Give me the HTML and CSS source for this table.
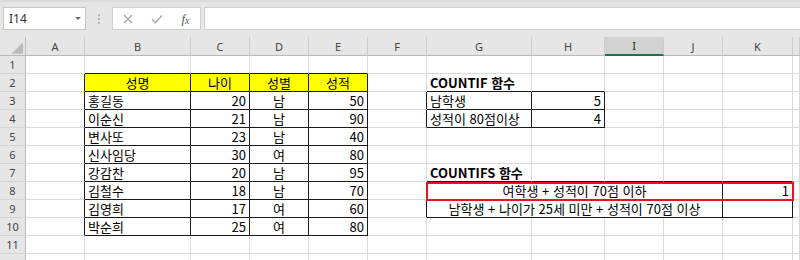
FILE: index.html
```html
<!DOCTYPE html>
<html lang="ko">
<head>
<meta charset="utf-8">
<title>COUNTIF / COUNTIFS</title>
<link rel="stylesheet" href="styles.css">
</head>
<body>
<div class="app">
  <div class="toolbar">
    <div class="namebox"><span class="nb-text">I14</span><span class="nb-arrow"></span></div>
    <div class="vsep"><i></i><i></i><i></i></div>
    <div class="fbtns">
      <span class="fb"><svg width="10" height="10" viewBox="0 0 10 10"><path d="M1 1L9 9M9 1L1 9" stroke="#a9a9a9" stroke-width="1.3" fill="none"/></svg></span>
      <span class="fb"><svg width="12" height="10" viewBox="0 0 12 10"><path d="M1 5.5L4.3 8.7L11 1.5" stroke="#a9a9a9" stroke-width="1.4" fill="none"/></svg></span>
      <span class="fb fx">f<span class="fxx">x</span></span>
    </div>
    <div class="finput"></div>
  </div>

  <div class="sheet">
    <!-- column headers -->
    <div class="ch corner"><svg width="26" height="18" viewBox="0 0 26 18"><polygon points="12,17 24,17 24,5" fill="#b9b9b9"/></svg></div>
    <div class="ch">A</div><div class="ch">B</div><div class="ch">C</div><div class="ch">D</div><div class="ch">E</div><div class="ch">F</div><div class="ch">G</div><div class="ch">H</div><div class="ch sel">I</div><div class="ch">J</div><div class="ch">K</div><div class="ch"></div>

    <!-- row 1 -->
    <div class="rh">1</div>
    <div class="c"></div><div class="c tt"></div><div class="c tt"></div><div class="c tt"></div><div class="c tt"></div><div class="c"></div><div class="c"></div><div class="c"></div><div class="c"></div><div class="c"></div><div class="c"></div><div class="c"></div>

    <!-- row 2 -->
    <div class="rh">2</div>
    <div class="c tl"></div>
    <div class="c t y m">성명</div><div class="c t y m">나이</div><div class="c t y m">성별</div><div class="c t y m">성적</div>
    <div class="c"></div>
    <div class="c tt b">COUNTIF 함수</div><div class="c tt"></div>
    <div class="c"></div><div class="c"></div><div class="c"></div><div class="c"></div>

    <!-- row 3 -->
    <div class="rh">3</div>
    <div class="c tl"></div>
    <div class="c t">홍길동</div><div class="c t r">20</div><div class="c t m">남</div><div class="c t r">50</div>
    <div class="c tl"></div>
    <div class="c t">남학생</div><div class="c t r">5</div>
    <div class="c"></div><div class="c"></div><div class="c"></div><div class="c"></div>

    <!-- row 4 -->
    <div class="rh">4</div>
    <div class="c tl"></div>
    <div class="c t">이순신</div><div class="c t r">21</div><div class="c t m">남</div><div class="c t r">90</div>
    <div class="c tl"></div>
    <div class="c t">성적이 80점이상</div><div class="c t r">4</div>
    <div class="c"></div><div class="c"></div><div class="c"></div><div class="c"></div>

    <!-- row 5 -->
    <div class="rh">5</div>
    <div class="c tl"></div>
    <div class="c t">변사또</div><div class="c t r">23</div><div class="c t m">남</div><div class="c t r">40</div>
    <div class="c"></div><div class="c"></div><div class="c"></div><div class="c"></div><div class="c"></div><div class="c"></div><div class="c"></div>

    <!-- row 6 -->
    <div class="rh">6</div>
    <div class="c tl"></div>
    <div class="c t">신사임당</div><div class="c t r">30</div><div class="c t m">여</div><div class="c t r">80</div>
    <div class="c"></div><div class="c"></div><div class="c"></div><div class="c"></div><div class="c"></div><div class="c"></div><div class="c"></div>

    <!-- row 7 -->
    <div class="rh">7</div>
    <div class="c tl"></div>
    <div class="c t">강감찬</div><div class="c t r">20</div><div class="c t m">남</div><div class="c t r">95</div>
    <div class="c"></div>
    <div class="c tt b">COUNTIFS 함수</div><div class="c tt"></div><div class="c tt"></div><div class="c tt"></div><div class="c tt"></div>
    <div class="c"></div>

    <!-- row 8 -->
    <div class="rh">8</div>
    <div class="c tl"></div>
    <div class="c t">김철수</div><div class="c t r">18</div><div class="c t m">남</div><div class="c t r">70</div>
    <div class="c tl"></div>
    <div class="c t m span4">여학생 + 성적이 70점 이하</div><div class="c t r">1</div>
    <div class="c"></div>

    <!-- row 9 -->
    <div class="rh">9</div>
    <div class="c tl"></div>
    <div class="c t">김영희</div><div class="c t r">17</div><div class="c t m">여</div><div class="c t r">60</div>
    <div class="c tl"></div>
    <div class="c t m span4">남학생 + 나이가 25세 미만 + 성적이 70점 이상</div><div class="c t"></div>
    <div class="c"></div>

    <!-- row 10 -->
    <div class="rh">10</div>
    <div class="c tl"></div>
    <div class="c t">박순희</div><div class="c t r">25</div><div class="c t m">여</div><div class="c t r">80</div>
    <div class="c"></div><div class="c"></div><div class="c"></div><div class="c"></div><div class="c"></div><div class="c"></div><div class="c"></div>

    <!-- row 11 -->
    <div class="rh">11</div>
    <div class="c"></div><div class="c"></div><div class="c"></div><div class="c"></div><div class="c"></div><div class="c"></div><div class="c"></div><div class="c"></div><div class="c"></div><div class="c"></div><div class="c"></div><div class="c"></div>

    <!-- row 12 (only a sliver visible) -->
    <div class="rh"></div>
    <div class="c"></div><div class="c"></div><div class="c"></div><div class="c"></div><div class="c"></div><div class="c"></div><div class="c"></div><div class="c"></div><div class="c"></div><div class="c"></div><div class="c"></div><div class="c"></div>

    <div class="hl"></div>
  </div>
</div>
</body>
</html>
```
FILE: styles.css
```css
html, body {
  margin: 0;
  padding: 0;
  background: #ffffff;
}
body {
  width: 800px;
  height: 260px;
  overflow: hidden;
}
.app {
  width: 800px;
}

/* ---------- formula bar ---------- */
.toolbar {
  display: flex;
  height: 37px;
  box-sizing: border-box;
  padding: 5px 0 0 3px;
  background: #e6e6e6;
  border-top: 2px solid #dcdcdc;
}
.namebox {
  width: 83px;
  height: 23px;
  box-sizing: border-box;
  border: 1px solid #c6c6c6;
  background: #ffffff;
  display: flex;
  align-items: center;
  justify-content: space-between;
  padding: 0 4px 0 5px;
  font: 12px "Noto Sans", sans-serif;
  color: #333333;
}
.nb-arrow {
  width: 0;
  height: 0;
  border-left: 3px solid transparent;
  border-right: 3px solid transparent;
  border-top: 3px solid #6a6a6a;
}
.vsep {
  width: 26px;
  height: 23px;
  display: flex;
  flex-direction: column;
  align-items: center;
  justify-content: center;
  gap: 2px;
}
.vsep i {
  display: block;
  width: 2px;
  height: 2px;
  background: #b5b5b5;
}
.fbtns {
  width: 89px;
  height: 23px;
  box-sizing: border-box;
  border: 1px solid #d0d0d0;
  background: #ffffff;
  display: flex;
}
.fb {
  width: 29px;
  display: flex;
  align-items: center;
  justify-content: center;
}
.fx {
  font: italic 13px "Liberation Serif", serif;
  color: #555555;
}
.fxx {
  font-size: 10px;
  position: relative;
  top: 2px;
}
.finput {
  flex: 1;
  margin-left: 3px;
  height: 23px;
  box-sizing: border-box;
  border: 1px solid #d0d0d0;
  border-right: none;
  background: #ffffff;
}

/* ---------- sheet ---------- */
.sheet {
  position: relative;
  display: grid;
  grid-template-columns: 26px 59px 106px 59px 59px 59px 59px 105px 73px 59px 59px 70px 1fr;
  grid-template-rows: 19px repeat(12, 18px);
}
.ch {
  background: #e6e6e6;
  border-right: 1px solid #cdcdcd;
  border-bottom: 1px solid #b8b8b8;
  box-sizing: border-box;
  font: 11px "Noto Sans", sans-serif;
  color: #444444;
  display: flex;
  align-items: center;
  justify-content: center;
}
.ch.corner {
  border-right-color: #bdbdbd;
}
.ch.sel {
  background: #d2d2d2;
  border-bottom: 2px solid #217346;
  color: #262626;
}
.rh {
  background: #e6e6e6;
  border-right: 1px solid #bdbdbd;
  border-bottom: 1px solid #d4d4d4;
  box-sizing: border-box;
  font: 11px "Noto Sans", sans-serif;
  color: #444444;
  display: flex;
  align-items: center;
  justify-content: center;
}
.c {
  border-right: 1px solid #dadada;
  border-bottom: 1px solid #dadada;
  box-sizing: border-box;
  padding: 0 3px;
  font: 13px/17px "Noto Sans CJK KR", "Noto Sans", sans-serif;
  color: #000000;
  white-space: nowrap;
  overflow: hidden;
}
.t { border-right-color: #1a1a1a; border-bottom-color: #1a1a1a; }
.tl { border-right-color: #1a1a1a; }
.tt { border-bottom-color: #1a1a1a; }
.r { text-align: right; }
.m { text-align: center; }
.y { background: #ffff00; }
.b { font-weight: bold; overflow: visible; }
.span4 { grid-column: span 4; }

/* highlight box over row 8 (G8:K8) */
.hl {
  position: absolute;
  grid-column: 8 / 13;
  grid-row: 9 / 10;
  top: 0;
  bottom: -1px;
  left: -1px;
  right: -1px;
  border: 2px solid #e3161e;
  pointer-events: none;
}
```
